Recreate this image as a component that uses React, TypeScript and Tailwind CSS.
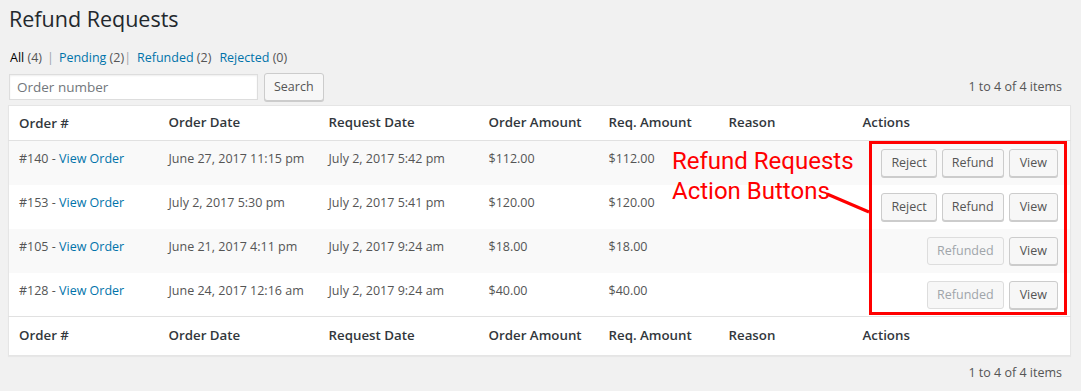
import React from 'react';

const rows = [
  { id: '#140', orderDate: 'June 27, 2017 11:15 pm', reqDate: 'July 2, 2017 5:42 pm', amount: '$112.00', req: '$112.00', refunded: false },
  { id: '#153', orderDate: 'July 2, 2017 5:30 pm', reqDate: 'July 2, 2017 5:41 pm', amount: '$120.00', req: '$120.00', refunded: false },
  { id: '#105', orderDate: 'June 21, 2017 4:11 pm', reqDate: 'July 2, 2017 9:24 am', amount: '$18.00', req: '$18.00', refunded: true },
  { id: '#128', orderDate: 'June 24, 2017 12:16 am', reqDate: 'July 2, 2017 9:24 am', amount: '$40.00', req: '$40.00', refunded: true },
];

const btn = 'h-[28px] px-[9px] rounded-[3px] border border-[#cccccc] bg-[#f7f7f7] text-[#555555] text-[12.5px] leading-[26px] shadow-[0_1px_0_#cccccc] whitespace-nowrap';
const btnOff = 'h-[28px] px-[9px] rounded-[3px] border border-[#dddddd] bg-[#f7f7f7] text-[#a0a5aa] text-[12.5px] leading-[26px] whitespace-nowrap';

function HeadRow({ top }: { top?: boolean }) {
  const cls = 'px-[10px] text-left font-semibold text-[#32373c] text-[13.3px] whitespace-nowrap';
  return (
    <tr className={top ? 'border-b border-[#e1e1e1]' : 'border-t border-[#e1e1e1]'}>
      <th className={`${cls} w-[150px] ${top ? 'h-[35px] pt-[1px]' : 'h-[39px]'}`}>Order #</th>
      <th className={`${cls} w-[160px]`}>Order Date</th>
      <th className={`${cls} w-[160px]`}>Request Date</th>
      <th className={`${cls} w-[120px]`}>Order Amount</th>
      <th className={`${cls} w-[120px]`}>Req. Amount</th>
      <th className={`${cls} w-[134px]`}>Reason</th>
      <th className={cls}>Actions</th>
    </tr>
  );
}

export default function App() {
  const td = 'px-[10px] align-top pt-[8px] leading-[20px] whitespace-nowrap';
  return (
    <div className="relative min-h-[391px] bg-[#f1f1f1] text-[#555555] text-[12.5px] pl-[8px] pr-[10px] pt-[4px]" style={{ fontFamily: '"Open Sans", "Noto Sans", sans-serif' }}>
      <h1 className="text-[21.5px] leading-[30px] text-[#23282d] pl-[1px]">Refund Requests</h1>

      <ul className="flex items-center mt-[14px] pl-[2px] leading-[20px]">
        <li><span className="text-black">All</span> (4)<span className="text-[#a0a5aa] mx-[5px]">|</span></li>
        <li><span className="text-[#0073aa]">Pending</span> (2)<span className="text-[#a0a5aa] mr-[6px]">|</span></li>
        <li className="mr-[8px]"><span className="text-[#0073aa]">Refunded</span> (2)</li>
        <li><span className="text-[#0073aa]">Rejected</span> (0)</li>
      </ul>

      <div className="flex items-center mt-[5px] mb-[4px]">
        <input className="w-[249px] h-[26px] ml-[1px] px-[7px] bg-white border border-[#dddddd] shadow-[inset_0_1px_2px_rgba(0,0,0,0.07)] text-[13.5px] placeholder:text-[#72777c] outline-none" placeholder="Order number" />
        <button className={`${btn} ml-[6px]`}>Search</button>
        <div className="ml-auto pr-[9px]">1 to 4 of 4 items</div>
      </div>

      <table className="w-full table-fixed border border-[#e5e5e5] bg-white shadow-[0_1px_1px_rgba(0,0,0,0.04)] border-collapse">
        <thead><HeadRow top /></thead>
        <tbody>
          {rows.map((r, i) => (
            <tr key={r.id} className={i % 2 === 0 ? 'bg-[#f9f9f9]' : 'bg-white'}>
              <td className={`${td} h-[44px]`}>{r.id} - <span className="text-[#0073aa]">View Order</span></td>
              <td className={td}>{r.orderDate}</td>
              <td className={td}>{r.reqDate}</td>
              <td className={td}>{r.amount}</td>
              <td className={td}>{r.req}</td>
              <td className="px-[10px]"></td>
              <td className="pr-[12px] align-top pt-[8px]">
                <div className="flex justify-end gap-[5px]">
                  {r.refunded ? (
                    <button className={btnOff}>Refunded</button>
                  ) : (
                    <>
                      <button className={btn}>Reject</button>
                      <button className={btn}>Refund</button>
                    </>
                  )}
                  <button className={`${btn} px-[10px]`}>View</button>
                </div>
              </td>
            </tr>
          ))}
        </tbody>
        <tfoot><HeadRow /></tfoot>
      </table>

      <div className="flex justify-end pr-[9px] mt-[8px]">1 to 4 of 4 items</div>

      {/* annotation overlay */}
      <div className="absolute left-[869px] top-[141px] w-[198px] h-[174px] border-[3px] border-[#ff0000] pointer-events-none" />
      <div className="absolute left-[672px] top-[146px] text-[#ff0000] text-[24px] leading-[30px]" style={{ fontFamily: 'Roboto, sans-serif' }}>
        <div>Refund Requests</div>
        <div>Action Buttons</div>
      </div>
      <svg className="absolute left-0 top-0 pointer-events-none" width="1081" height="391">
        <line x1="827" y1="194" x2="869" y2="212" stroke="#ff0000" strokeWidth="3" />
      </svg>
    </div>
  );
}
